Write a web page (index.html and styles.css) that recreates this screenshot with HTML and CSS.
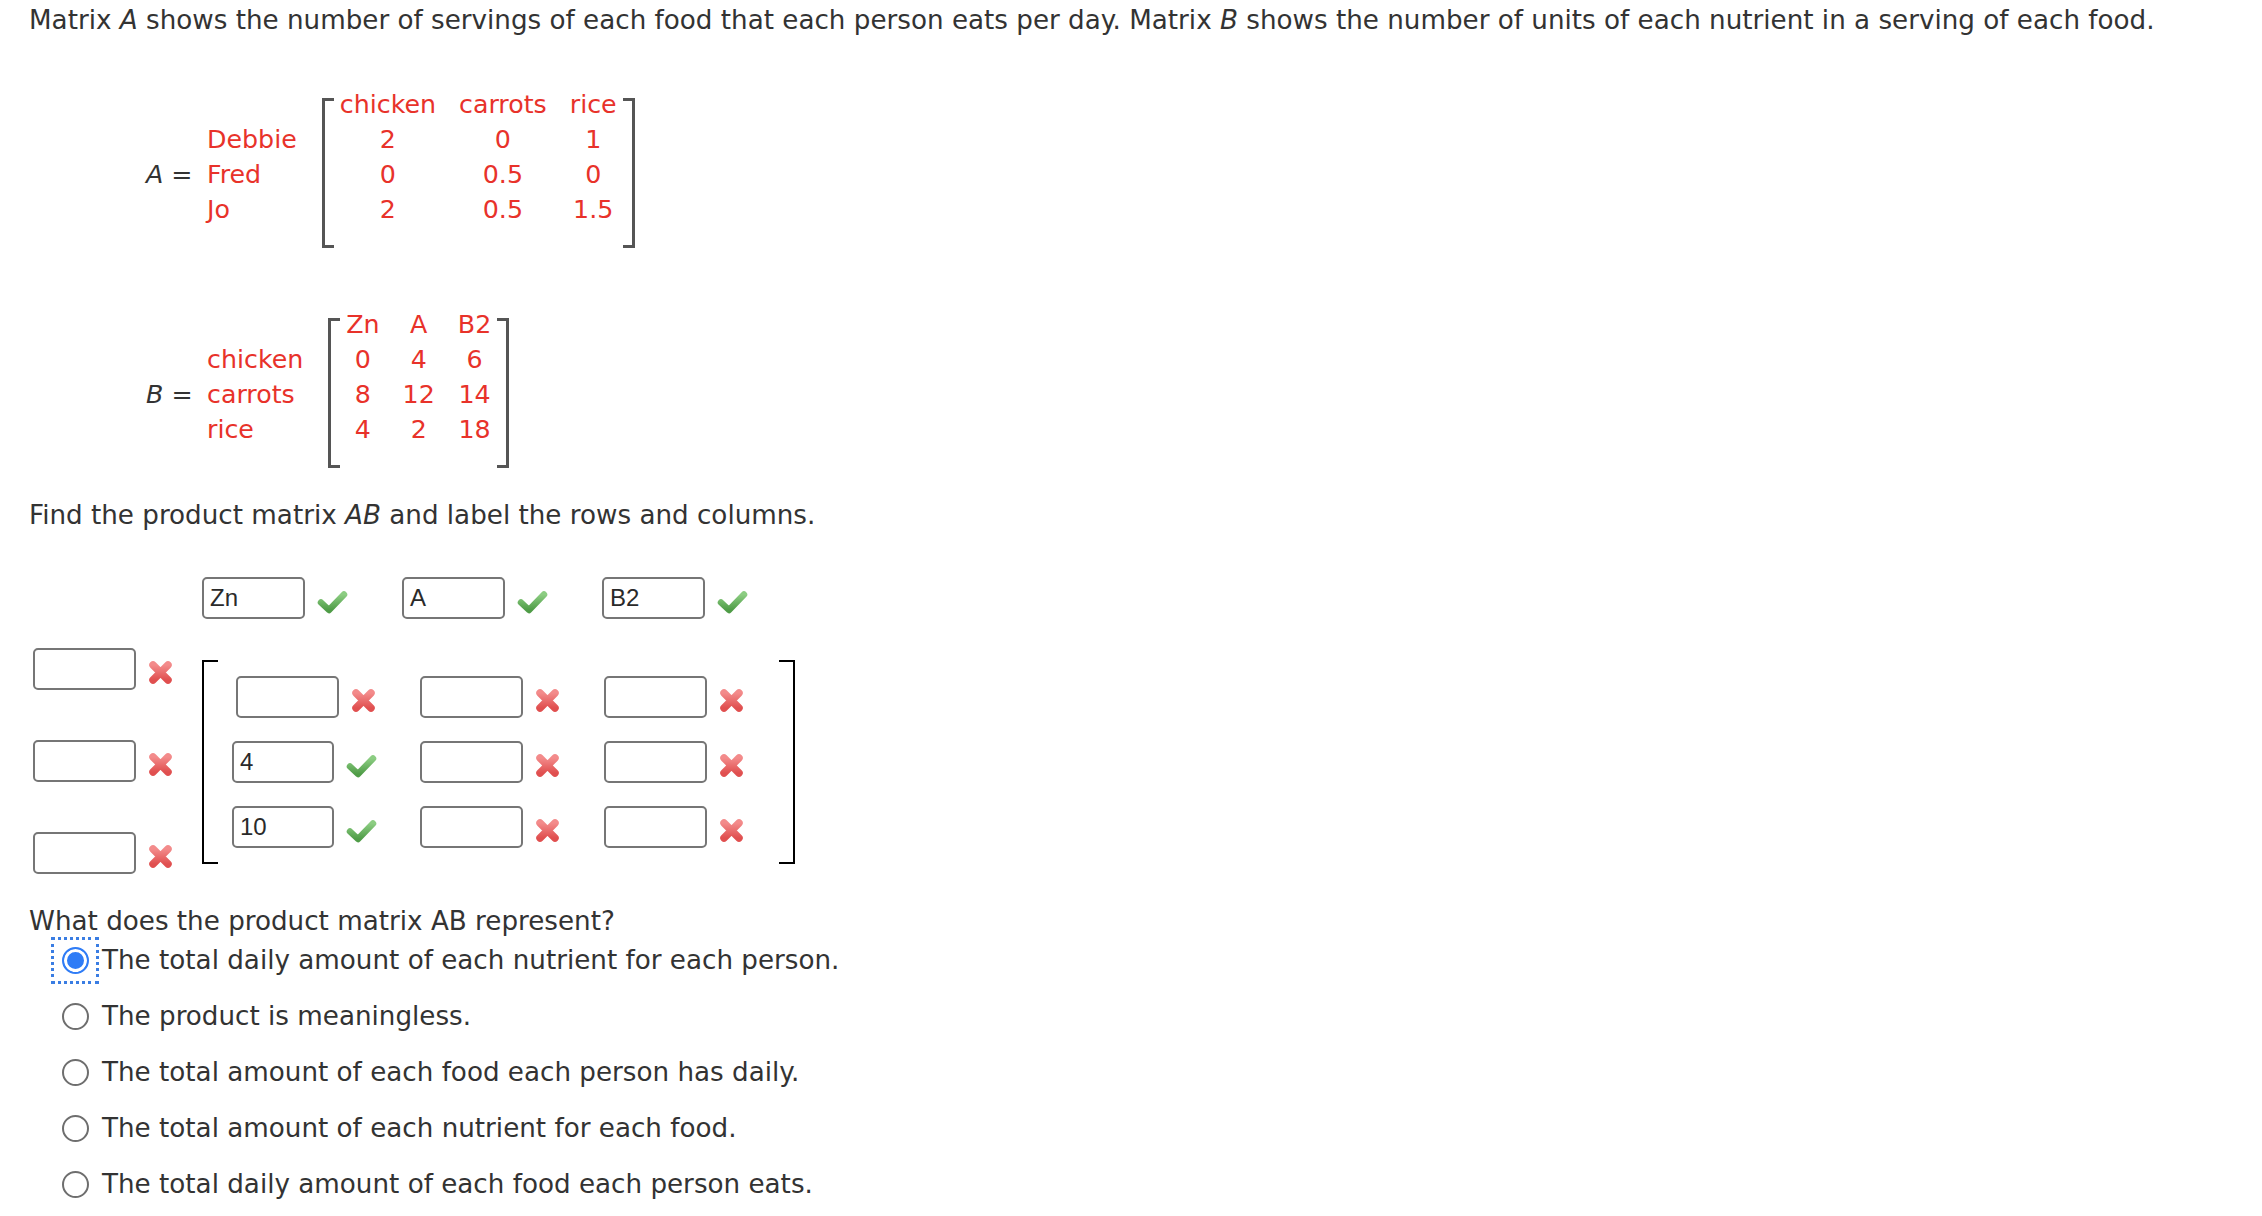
FILE: index.html
```html
<!DOCTYPE html>
<html>
<head>
<meta charset="utf-8">
<title>Matrix product</title>
<link rel="stylesheet" href="styles.css">
</head>
<body>
<svg class="defs" width="0" height="0" aria-hidden="true">
  <defs>
    <linearGradient id="gOk" x1="0" y1="0" x2="0" y2="1">
      <stop offset="0" stop-color="#8ccd82"/>
      <stop offset="1" stop-color="#4f9c47"/>
    </linearGradient>
    <linearGradient id="gNo" x1="0" y1="0" x2="0" y2="1">
      <stop offset="0" stop-color="#f38b8b"/>
      <stop offset="1" stop-color="#e04f4f"/>
    </linearGradient>
    <symbol id="ok" viewBox="0 0 32 26">
      <path d="M5 13.5 L13 21 L28 5.5" fill="none" stroke="url(#gOk)" stroke-width="6.5" stroke-linecap="round" stroke-linejoin="round"/>
    </symbol>
    <symbol id="no" viewBox="0 0 27 27">
      <path d="M6 6 L21 21 M21 6 L6 21" fill="none" stroke="url(#gNo)" stroke-width="7.5" stroke-linecap="round"/>
    </symbol>
  </defs>
</svg>
<div class="page">
  <p class="intro">Matrix <i>A</i> shows the number of servings of each food that each person eats per day. Matrix <i>B</i> shows the number of units of each nutrient in a serving of each food.</p>

  <div class="mateq mateq-a">
    <div class="lhs"><div></div><div></div><div><i>A</i> =</div><div></div></div>
    <div class="rowlabels"><div>&nbsp;</div><div>Debbie</div><div>Fred</div><div>Jo</div></div>
    <div class="bmat">
      <span>chicken</span><span>carrots</span><span>rice</span>
      <span>2</span><span>0</span><span>1</span>
      <span>0</span><span>0.5</span><span>0</span>
      <span>2</span><span>0.5</span><span>1.5</span>
    </div>
  </div>

  <div class="mateq mateq-b">
    <div class="lhs"><div></div><div></div><div><i>B</i> =</div><div></div></div>
    <div class="rowlabels"><div>&nbsp;</div><div>chicken</div><div>carrots</div><div>rice</div></div>
    <div class="bmat">
      <span>Zn</span><span>A</span><span>B2</span>
      <span>0</span><span>4</span><span>6</span>
      <span>8</span><span>12</span><span>14</span>
      <span>4</span><span>2</span><span>18</span>
    </div>
  </div>

  <p class="find">Find the product matrix <i>AB</i> and label the rows and columns.</p>

  <div class="ab-head">
    <div class="cell"><span class="inp">Zn</span><svg class="ic ok"><use href="#ok"/></svg></div>
    <div class="cell"><span class="inp">A</span><svg class="ic ok"><use href="#ok"/></svg></div>
    <div class="cell"><span class="inp">B2</span><svg class="ic ok"><use href="#ok"/></svg></div>
  </div>

  <div class="ab-body">
    <div class="labels">
      <div class="cell"><span class="inp"></span><svg class="ic no"><use href="#no"/></svg></div>
      <div class="cell"><span class="inp"></span><svg class="ic no"><use href="#no"/></svg></div>
      <div class="cell"><span class="inp"></span><svg class="ic no"><use href="#no"/></svg></div>
    </div>
    <div class="pm">
      <div class="cell"><span class="inp"></span><svg class="ic no"><use href="#no"/></svg></div>
      <div class="cell"><span class="inp"></span><svg class="ic no"><use href="#no"/></svg></div>
      <div class="cell"><span class="inp"></span><svg class="ic no"><use href="#no"/></svg></div>
      <div class="cell"><span class="inp">4</span><svg class="ic ok"><use href="#ok"/></svg></div>
      <div class="cell"><span class="inp"></span><svg class="ic no"><use href="#no"/></svg></div>
      <div class="cell"><span class="inp"></span><svg class="ic no"><use href="#no"/></svg></div>
      <div class="cell"><span class="inp">10</span><svg class="ic ok"><use href="#ok"/></svg></div>
      <div class="cell"><span class="inp"></span><svg class="ic no"><use href="#no"/></svg></div>
      <div class="cell"><span class="inp"></span><svg class="ic no"><use href="#no"/></svg></div>
    </div>
  </div>

  <p class="q">What does the product matrix AB represent?</p>
  <div class="opts">
    <div class="opt"><span class="focus"><span class="rad on"></span></span><span>The total daily amount of each nutrient for each person.</span></div>
    <div class="opt"><span class="focus off"><span class="rad"></span></span><span>The product is meaningless.</span></div>
    <div class="opt"><span class="focus off"><span class="rad"></span></span><span>The total amount of each food each person has daily.</span></div>
    <div class="opt"><span class="focus off"><span class="rad"></span></span><span>The total amount of each nutrient for each food.</span></div>
    <div class="opt"><span class="focus off"><span class="rad"></span></span><span>The total daily amount of each food each person eats.</span></div>
  </div>
</div>
</body>
</html>
```

FILE: styles.css
```css
* { box-sizing: border-box; }
html, body { margin: 0; padding: 0; background: #ffffff; }
body {
  font-family: "DejaVu Sans", Verdana, sans-serif;
  font-size: 26.2px;
  color: #333333;
}
.defs { position: absolute; width: 0; height: 0; overflow: hidden; }

.page { padding: 2px 0 0 29px; }

.intro { margin: 0; line-height: 36px; white-space: nowrap; }

/* given matrices */
.mateq {
  display: flex;
  align-items: flex-start;
  margin-left: 117px;
  font-size: 25.3px;
  line-height: 35px;
  color: #e8322a;
}
.mateq-a { margin-top: 49px; }
.mateq-b { margin-top: 80px; }
.lhs { width: 61px; color: #333333; white-space: nowrap; }
.lhs div { height: 35px; }
.rowlabels { margin-right: 25px; }
.rowlabels div { height: 35px; }
.bmat {
  position: relative;
  padding: 0 18px;
  display: grid;
  grid-template-columns: repeat(3, auto);
  column-gap: 23px;
  justify-items: center;
}
.bmat::before, .bmat::after {
  content: "";
  position: absolute;
  top: 11px;
  bottom: -21px;
  width: 9px;
  border: 3px solid #555555;
}
.bmat::before { left: 0; border-right: none; }
.bmat::after { right: 0; border-left: none; }

.find { margin: 50px 0 0; line-height: 36px; }

/* answer area */
.cell { display: flex; align-items: center; justify-content: flex-end; gap: 11px; }
.inp {
  display: flex;
  align-items: center;
  width: 103px;
  height: 42px;
  padding: 0 6px;
  border: 2px solid #767676;
  border-radius: 5px;
  background: #ffffff;
  font-family: "Liberation Sans", Arial, sans-serif;
  font-size: 24px;
  color: #2a2a2a;
}
.ic { flex: none; margin-top: 7px; }
.ic.ok { width: 32px; height: 26px; }
.ic.no { width: 27px; height: 27px; }

.ab-head { display: flex; gap: 54px; margin: 44px 0 0 173px; }

.ab-body { display: flex; align-items: flex-start; margin-top: 29px; }
.labels { display: flex; flex-direction: column; gap: 50px; margin-left: 4px; margin-right: 28px; }
.pm {
  position: relative;
  margin-top: 12px;
  padding: 16px 50px 16px 30px;
  display: grid;
  grid-template-columns: repeat(3, 145px);
  column-gap: 39px;
  row-gap: 23px;
}
.pm::before, .pm::after {
  content: "";
  position: absolute;
  top: 0;
  bottom: 0;
  width: 14px;
  border: 2px solid #000000;
}
.pm::before { left: 0; border-right: none; }
.pm::after { right: 0; border-left: none; }

.q { margin: 29px 0 0; line-height: 36px; }

.opts { margin-top: 3px; }
.opt { display: flex; align-items: center; height: 36px; margin-bottom: 20px; white-space: nowrap; }
.focus {
  flex: none;
  display: flex;
  align-items: center;
  justify-content: center;
  width: 48px;
  height: 47px;
  margin: 0 3px 0 22px;
  border: 3px dotted #3a7de3;
}
.focus.off { border-color: transparent; }
.rad {
  width: 27px;
  height: 27px;
  border-radius: 50%;
  border: 2px solid #6e6e6e;
  background: #ffffff;
}
.rad.on {
  border-color: #2f7cf6;
  background: #2f7cf6;
  box-shadow: inset 0 0 0 3px #ffffff;
}
```
